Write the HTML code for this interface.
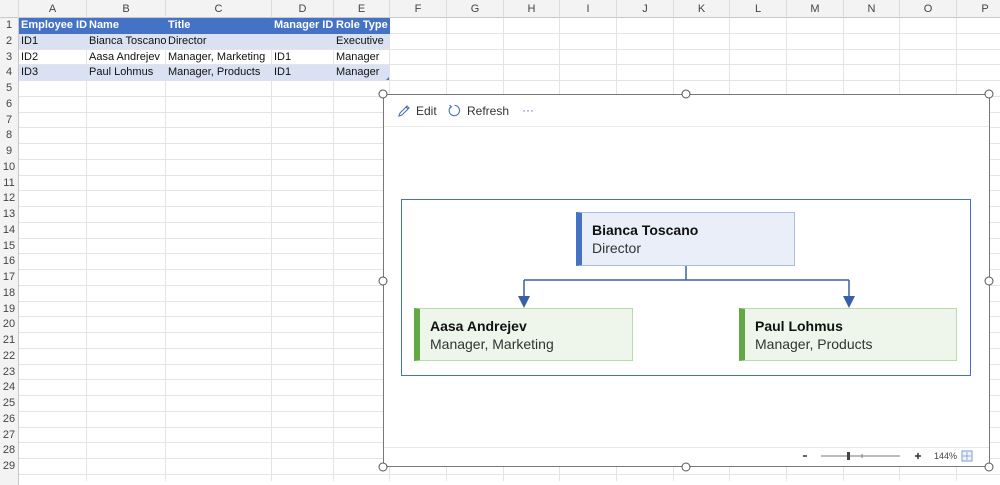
<!DOCTYPE html>
<html><head><style>
*{margin:0;padding:0;box-sizing:border-box}
body{width:1000px;height:481px;overflow:hidden;background:#fff;font-family:"Liberation Sans",Calibri,sans-serif;position:relative}
.a{position:absolute}
.ch{position:absolute;top:0;height:18px;background:#f3f3f3;border-right:1px solid #dcdcdc;border-bottom:1px solid #c8c8c8;font-size:11px;color:#444;text-align:center;line-height:19px}
.rh{position:absolute;left:0;width:19px;background:#f3f3f3;border-right:1px solid #c8c8c8;font-size:11px;color:#444;text-align:center}
.vl{position:absolute;top:18px;bottom:0;width:1px;background:#e4e4e4}
.hl{position:absolute;left:19px;right:0;height:1px;background:#e4e4e4}
.c{position:absolute;font-size:11px;color:#111;white-space:nowrap;line-height:15px}
.node{position:absolute;border:1px solid;}
.node b{position:absolute;left:10px;font-size:14px;color:#111}
.node span{position:absolute;left:10px;font-size:14px;color:#333}
</style></head><body>
<div id="g"></div>
<div class="a" style="left:19px;top:18px;width:371px;height:16px;background:#4472c4"></div>
<div class="a" style="left:19px;top:34px;width:371px;height:15px;background:#d9e1f2"></div>
<div class="a" style="left:19px;top:65px;width:371px;height:16px;background:#d9e1f2"></div>
<div id="t"></div>
<div class="a" style="left:383px;top:94px;width:607px;height:373px;background:#fff;border:1px solid #777"></div>
<div class="a" style="left:384px;top:126px;width:605px;height:1px;background:#e8e8e8"></div>
<div class="a" style="left:384px;top:447px;width:605px;height:1px;background:#e8e8e8"></div>
<svg class="a" style="left:397px;top:103px" width="14" height="16" viewBox="0 0 14 16"><path d="M2 13 L3 10 L10 3 L12 5 L5 12 Z M9 4 L11 6" fill="none" stroke="#4a6fb5" stroke-width="1.1"/></svg>
<div class="c" style="left:416px;top:104px;font-size:12px;color:#333">Edit</div>
<svg class="a" style="left:447px;top:103px" width="15" height="15" viewBox="0 0 15 15"><path d="M4 3.5 A5.2 5.2 0 1 0 7.5 2.3" fill="none" stroke="#4a6fb5" stroke-width="1.1"/><path d="M2.5 2 L4.5 3.8 L2.5 5.5" fill="none" stroke="#4a6fb5" stroke-width="1"/></svg>
<div class="c" style="left:467px;top:104px;font-size:12px;color:#333">Refresh</div>
<div class="c" style="left:522px;top:103px;font-size:12px;color:#4a6fb5">···</div>
<div class="a" style="left:401px;top:199px;width:570px;height:177px;border:1.5px solid #4472c4"></div>
<svg class="a" style="left:0;top:0" width="1000" height="481"><path d="M686 266 V280 M524 280 H849 M524 280 V299 M849 280 V299" stroke="#3a5fa8" stroke-width="1.5" fill="none"/><path d="M518 296 L530 296 L524 308 Z M843 296 L855 296 L849 308 Z" fill="#3a5fa8"/>
<g fill="#fff" stroke="#555" stroke-width="1"><circle cx="383" cy="94" r="4"/><circle cx="686" cy="94" r="4"/><circle cx="989" cy="94" r="4"/><circle cx="383" cy="281" r="4"/><circle cx="989" cy="281" r="4"/><circle cx="383" cy="467" r="4"/><circle cx="686" cy="467" r="4"/><circle cx="989" cy="467" r="4"/></g>
<path d="M821 456 H900" stroke="#777" stroke-width="1"/><rect x="847" y="452" width="3" height="8" fill="#444"/><path d="M862 454 V458" stroke="#777"/>
<path d="M803 456 H807 M915 456 H921 M918 453 V459" stroke="#333" stroke-width="1.5"/>
<rect x="962" y="451" width="10" height="10" fill="#eef3fb" stroke="#7a9bd0"/><path d="M967 452 V460 M963 456 H971" stroke="#7a9bd0" stroke-width="0.8"/>
</svg>
<div class="c" style="left:934px;top:449px;font-size:9px;color:#444">144%</div>
<div class="node" style="left:576px;top:212px;width:219px;height:54px;background:#e9eef8;border-color:#a9bde3;border-left:6px solid #4472c4"><b style="top:9px">Bianca Toscano</b><span style="top:27px">Director</span></div>
<div class="node" style="left:414px;top:308px;width:219px;height:53px;background:#eef6eb;border-color:#b7dba9;border-left:6px solid #62a844"><b style="top:9px">Aasa Andrejev</b><span style="top:27px">Manager, Marketing</span></div>
<div class="node" style="left:739px;top:308px;width:218px;height:53px;background:#eef6eb;border-color:#b7dba9;border-left:6px solid #62a844"><b style="top:9px">Paul Lohmus</b><span style="top:27px">Manager, Products</span></div>
<script>
var cols=[19,87,166,272,334,390,447,504,560,617,674,730,787,844,900,957,1014];
var L="ABCDEFGHIJKLMNOP",h="";
h+='<div class="ch" style="left:0;width:19px"></div>';
for(var i=0;i<16;i++){h+='<div class="ch" style="left:'+cols[i]+'px;width:'+(cols[i+1]-cols[i])+'px">'+L[i]+'</div>';if(i>0)h+='<div class="vl" style="left:'+(cols[i]-1)+'px"></div>';}
var rh=15.75;
for(var r=0;r<29;r++){var y=18+r*rh;h+='<div class="rh" style="top:'+y+'px;height:'+rh+'px;line-height:'+rh+'px">'+(r+1)+'</div>';h+='<div class="hl" style="top:'+(y+rh-1)+'px"></div>';}
h+='<div class="rh" style="top:474.75px;height:10px"></div>';
document.getElementById('g').innerHTML=h;
var d=[["Employee ID","Name","Title","Manager ID","Role Type"],["ID1","Bianca Toscano","Director","","Executive"],["ID2","Aasa Andrejev","Manager, Marketing","ID1","Manager"],["ID3","Paul Lohmus","Manager, Products","ID1","Manager"]];
var t="";
for(var r=0;r<4;r++)for(var c=0;c<5;c++){t+='<div class="c" style="left:'+(cols[c]+2)+'px;top:'+(18+r*rh)+'px;'+(r==0?'color:#fff;font-weight:bold;':'')+'">'+d[r][c]+'</div>';}
t+='<div class="a" style="left:386px;top:77px;width:0;height:0;border-left:3px solid transparent;border-bottom:3px solid #4472c4"></div>';
document.getElementById('t').innerHTML=t;
</script>
</body></html>
